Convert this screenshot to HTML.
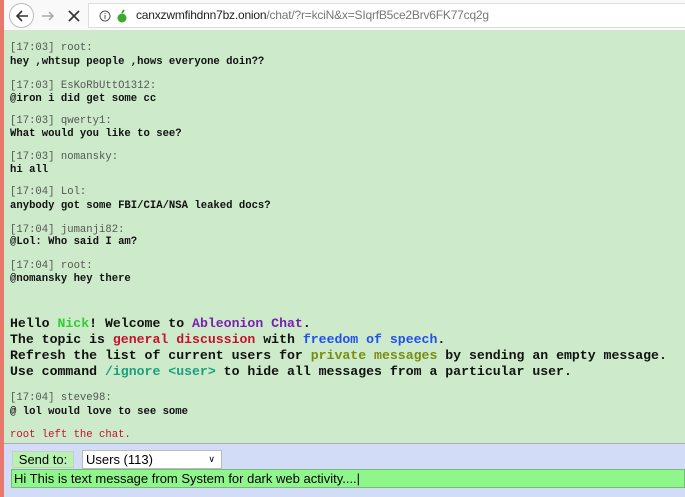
<!DOCTYPE html><html><head><style>
*{margin:0;padding:0;box-sizing:border-box}
body{width:685px;height:497px;overflow:hidden;background:#cdebcb;position:relative;font-family:"Liberation Mono",monospace}
#stripe{position:absolute;left:0;top:0;width:4px;height:497px;background:#e8786c}
#bar{position:absolute;left:4px;top:0;width:681px;height:31px;background:#f9f9f9;border-bottom:1px solid #ddd}
#back{position:absolute;left:5px;top:3px;width:25px;height:25px;border:1px solid #bbb;border-radius:50%;background:#fff}
#url{position:absolute;left:88px;top:3px;width:600px;height:25px;background:#fff;border:1px solid #ddd;font-family:"Liberation Sans",sans-serif;font-size:12px;line-height:23px;padding-left:47px;color:#222;letter-spacing:-0.2px}
#url span{color:#777}
.t{position:absolute;left:10px;font-size:10.6px;white-space:pre}
.h{color:#555}
.m{color:#111;font-weight:bold}
.w{position:absolute;left:10px;font-size:13.2px;font-weight:bold;white-space:pre;color:#111}
#panel{position:absolute;left:4px;top:443px;width:681px;height:54px;background:#d3dcf7;border-top:1px solid #aab}
#btn{position:absolute;left:12px;top:451px;width:62px;height:17px;background:#b7f2b0;border:1px solid #ccc;font:13px "Liberation Sans",sans-serif;line-height:15px;text-align:center}
#sel{position:absolute;left:82px;top:450px;width:140px;height:19px;background:#fff;border:1px solid #bbb;font:13px "Liberation Sans",sans-serif;line-height:17px;padding-left:3px}
#inp{position:absolute;left:11px;top:469px;width:674px;height:19px;background:#8ff68b;border:1px solid #7b7;font:13px "Liberation Sans",sans-serif;line-height:17px;padding-left:2px}
</style></head><body>
<div id="stripe"></div>
<div id="bar">
<div id="back"><svg width="25" height="25"><path d="M18 12H7M12 7l-5 5 5 5" stroke="#333" stroke-width="1.6" fill="none"/></svg></div>
<svg style="position:absolute;left:36px;top:8px" width="16" height="16"><path d="M2 8h11M9 4l4 4-4 4" stroke="#aaa" stroke-width="1.5" fill="none"/></svg>
<svg style="position:absolute;left:62px;top:8px" width="16" height="16"><path d="M3 3l10 10M13 3L3 13" stroke="#333" stroke-width="1.6"/></svg>
</div>
<div id="url"><svg style="position:absolute;left:10px;top:6px" width="12" height="12"><circle cx="6" cy="6" r="5" stroke="#555" fill="none"/><path d="M6 5v4M6 3v1" stroke="#555"/></svg><svg style="position:absolute;left:28px;top:5px" width="10" height="14"><ellipse cx="5" cy="9" rx="4.5" ry="4.5" fill="#3cab2c"/><path d="M5 4l2-3" stroke="#3cab2c" stroke-width="2"/></svg>canxzwmfihdnn7bz.onion<span>/chat/?r=kciN&amp;x=SIqrfB5ce2Brv6FK77cq2g</span></div>
<div class="t h" style="top:42px">[17:03] root:</div><div class="t m" style="top:56px">hey ,whtsup people ,hows everyone doin??</div>
<div class="t h" style="top:80px">[17:03] EsKoRbUttO1312:</div><div class="t m" style="top:93px">@iron i did get some cc</div>
<div class="t h" style="top:115px">[17:03] qwerty1:</div><div class="t m" style="top:128px">What would you like to see?</div>
<div class="t h" style="top:151px">[17:03] nomansky:</div><div class="t m" style="top:164px">hi all</div>
<div class="t h" style="top:186px">[17:04] Lol:</div><div class="t m" style="top:200px">anybody got some FBI/CIA/NSA leaked docs?</div>
<div class="t h" style="top:224px">[17:04] jumanji82:</div><div class="t m" style="top:236px">@Lol: Who said I am?</div>
<div class="t h" style="top:260px">[17:04] root:</div><div class="t m" style="top:273px">@nomansky hey there</div>
<div class="w" style="top:316px">Hello <span style="color:#3c3">Nick</span>! Welcome to <span style="color:#7a1fb0">Ableonion Chat</span>.</div>
<div class="w" style="top:332px">The topic is <span style="color:#c8102e">general discussion</span> with <span style="color:#1f4ff0">freedom of speech</span>.</div>
<div class="w" style="top:348px">Refresh the list of current users for <span style="color:#7a8c10">private messages</span> by sending an empty message.</div>
<div class="w" style="top:364px">Use command <span style="color:#1aa080">/ignore &lt;user&gt;</span> to hide all messages from a particular user.</div>
<div class="t h" style="top:392px">[17:04] steve98:</div><div class="t m" style="top:406px">@ lol would love to see some</div>
<div class="t" style="top:429px;color:#c8102e">root left the chat.</div>
<div id="panel"></div>
<div id="btn">Send to:</div>
<div id="sel">Users (113)<span style="position:absolute;right:6px;font-size:9px">&#8744;</span></div>
<div id="inp">Hi This is text message from System for dark web activity....|</div>
</body></html>
